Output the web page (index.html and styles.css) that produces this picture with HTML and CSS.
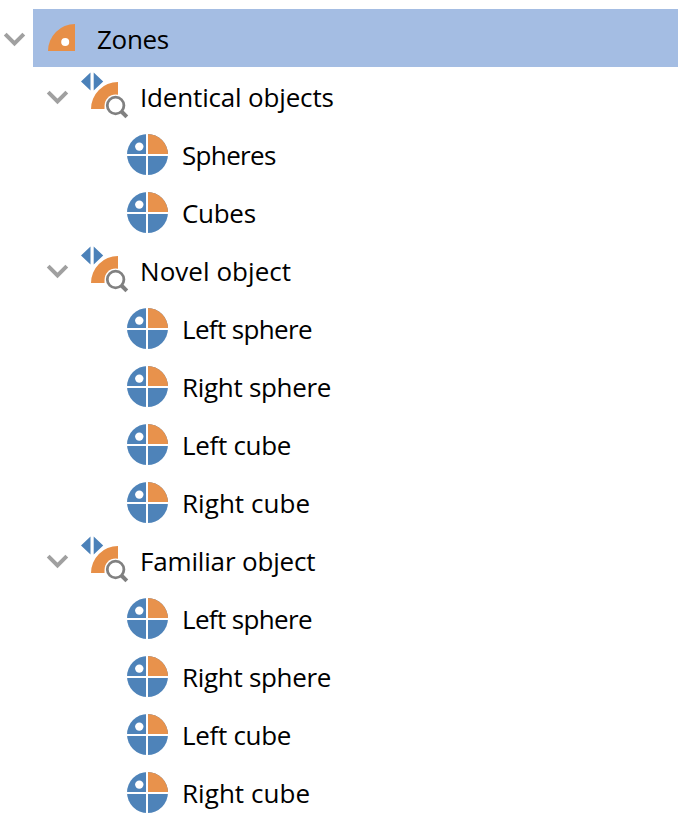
FILE: index.html
```html
<!DOCTYPE html>
<html lang="en">

<head>
    <meta charset="UTF-8">
    <meta name="viewport" content="width=device-width, initial-scale=1.0">
    <title>Zones</title>
    <link rel="stylesheet" href="styles.css">
</head>

<body>
    <svg class="symbols" aria-hidden="true">
        <symbol id="chevron" viewBox="0 0 33 58">
            <path d="M5.2 25.2l9.3 9.3 9.3-9.3" fill="none" stroke="#a0a0a0" stroke-width="4" />
        </symbol>
        <symbol id="zone" viewBox="0 0 64 58">
            <path d="M42 15v27H15a27 27 0 0 1 27-27z" fill="#e78f47" />
            <circle cx="32.2" cy="33" r="4" fill="#fff" />
        </symbol>
        <symbol id="group" viewBox="0 0 64 58">
            <path d="M14.5 5.5v18L5 14.5zM17.7 5.5v18l9.5-9z" fill="#4b81b9" />
            <path d="M42 15v13.5A13.5 13.5 0 0 0 28.5 42H15a27 27 0 0 1 27-27z" fill="#e78f47" />
            <circle cx="39.6" cy="38.5" r="11" fill="#fff" />
            <circle cx="39.6" cy="38.5" r="8.3" fill="#fff" stroke="#808080" stroke-width="2.8" />
            <path d="M45.5 44.5l5.3 5.3" stroke="#808080" stroke-width="4" />
        </symbol>
        <symbol id="pie" viewBox="0 0 64 58">
            <circle cx="28.5" cy="29.5" r="20.5" fill="#4e83b9" />
            <path d="M28.5 29.5V9A20.5 20.5 0 0 1 49 29.5z" fill="#e8924c" />
            <path d="M28 8v43M7 30h43" stroke="#fff" stroke-width="2" />
            <circle cx="20.3" cy="21.6" r="4.2" fill="#fff" />
        </symbol>
    </svg>

    <ul class="tree">
        <li>
            <div class="row">
                <svg class="toggle"><use href="#chevron" /></svg>
                <div class="item selected"><svg class="icon"><use href="#zone" /></svg><span class="label">Zones</span></div>
            </div>
            <ul>
                <li>
                    <div class="row">
                        <svg class="toggle"><use href="#chevron" /></svg>
                        <div class="item"><svg class="icon"><use href="#group" /></svg><span class="label group">Identical objects</span></div>
                    </div>
                    <ul>
                        <li class="leaf"><svg class="icon"><use href="#pie" /></svg><span class="label tight">Spheres</span></li>
                        <li class="leaf"><svg class="icon"><use href="#pie" /></svg><span class="label">Cubes</span></li>
                    </ul>
                </li>
                <li>
                    <div class="row">
                        <svg class="toggle"><use href="#chevron" /></svg>
                        <div class="item"><svg class="icon"><use href="#group" /></svg><span class="label wide">Novel object</span></div>
                    </div>
                    <ul>
                        <li class="leaf"><svg class="icon"><use href="#pie" /></svg><span class="label tight">Left sphere</span></li>
                        <li class="leaf"><svg class="icon"><use href="#pie" /></svg><span class="label">Right sphere</span></li>
                        <li class="leaf"><svg class="icon"><use href="#pie" /></svg><span class="label">Left cube</span></li>
                        <li class="leaf"><svg class="icon"><use href="#pie" /></svg><span class="label wide">Right cube</span></li>
                    </ul>
                </li>
                <li>
                    <div class="row">
                        <svg class="toggle"><use href="#chevron" /></svg>
                        <div class="item"><svg class="icon"><use href="#group" /></svg><span class="label group">Familiar object</span></div>
                    </div>
                    <ul>
                        <li class="leaf"><svg class="icon"><use href="#pie" /></svg><span class="label tight">Left sphere</span></li>
                        <li class="leaf"><svg class="icon"><use href="#pie" /></svg><span class="label">Right sphere</span></li>
                        <li class="leaf"><svg class="icon"><use href="#pie" /></svg><span class="label">Left cube</span></li>
                        <li class="leaf"><svg class="icon"><use href="#pie" /></svg><span class="label wide">Right cube</span></li>
                    </ul>
                </li>
            </ul>
        </li>
    </ul>
</body>

</html>
```
FILE: styles.css
```css
body {
    margin: 0;
    background-color: #fff;
    color: #000;
    font-family: "Segoe UI", "Open Sans", "Noto Sans", sans-serif;
    font-size: 26px;
    overflow: hidden;
}

.symbols {
    display: none;
}

.tree {
    padding: 9px 6px 0 0;
}

ul {
    list-style: none;
    margin: 0;
    padding: 0;
}

ul ul {
    padding-left: 43px;
}

.row {
    display: flex;
    height: 58px;
}

.toggle {
    flex: none;
    width: 33px;
    height: 58px;
}

.item,
.leaf {
    display: flex;
    align-items: center;
    height: 58px;
    white-space: nowrap;
}

.item {
    flex: 1;
}

.leaf {
    padding-left: 33px;
}

.selected {
    background-color: #a4bde3;
}

.icon {
    flex: none;
    width: 64px;
    height: 58px;
}

.leaf .label {
    margin-left: -1px;
}

.label {
    padding-top: 2px;
    letter-spacing: -0.3px;
}

.group {
    letter-spacing: -0.17px;
}

.wide {
    letter-spacing: 0.05px;
}

.tight {
    letter-spacing: -0.65px;
}
```
